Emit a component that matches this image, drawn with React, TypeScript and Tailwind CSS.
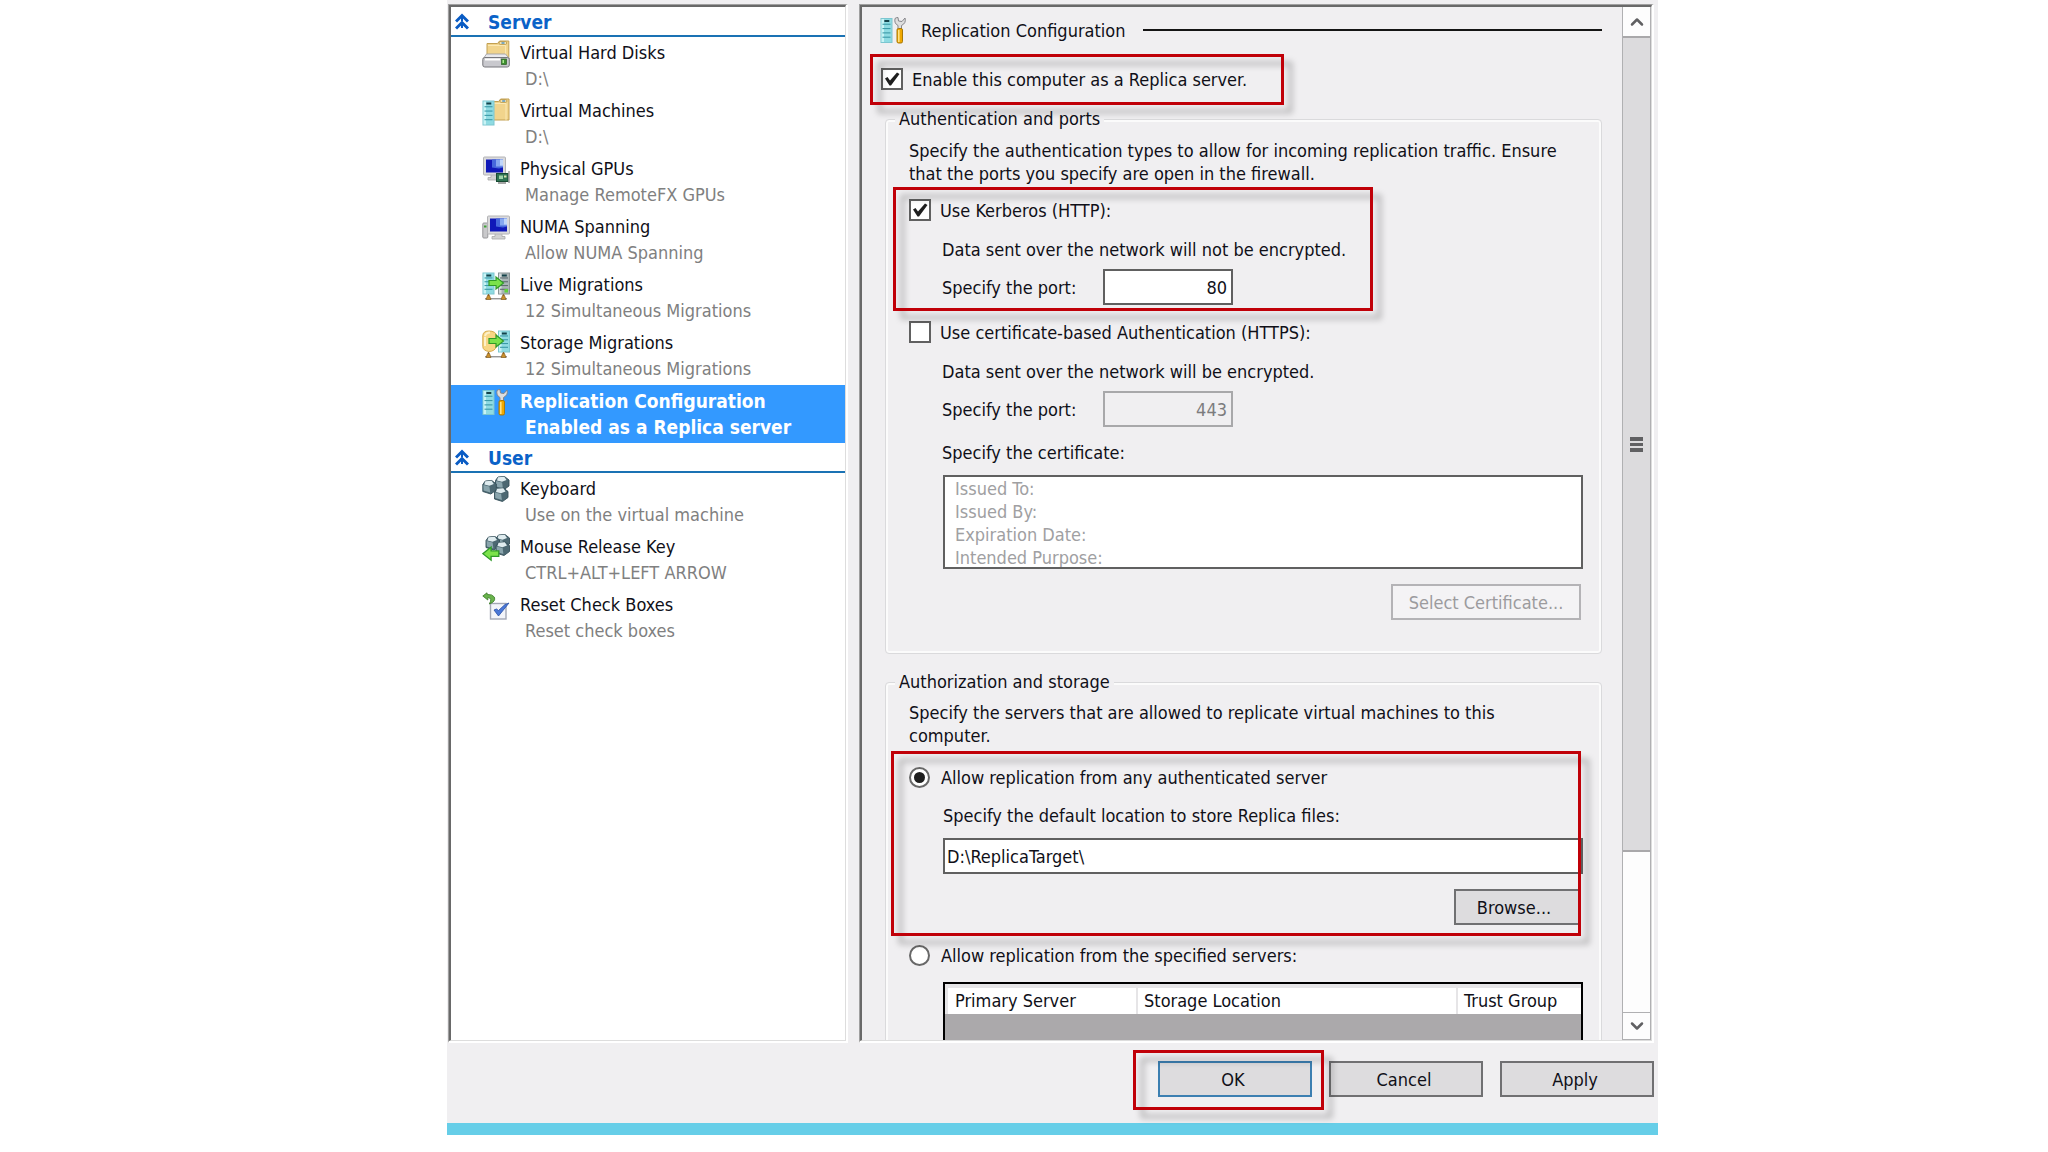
import { useState, type ReactNode } from 'react';
import { ChevronDown, ChevronUp } from 'lucide-react';

/* ---------- icons ---------- */

const iconProps = { width: 28, height: 28, viewBox: '0 0 28 28', className: 'shrink-0', 'aria-hidden': true };

function Folder({ x = 0, y = 0, w = 22, h = 20 }: { x?: number; y?: number; w?: number; h?: number }) {
  return (
    <g>
      <path d={`M${x} ${y + 3} h${w * 0.48} l2 -2.5 h${w * 0.42} v${h} h${-w * 0.9 - 2} z`} fill="#f1d48c" stroke="#c2a052" strokeWidth="1" />
      <rect x={x + w * 0.55} y={y + 1.2} width={w * 0.34} height="2.6" rx="1" fill="#fff3c4" stroke="#b08d3c" strokeWidth="0.8" />
      <rect x={x + w * 0.66} y={y + 1.8} width="3" height="1.4" fill="#4a90c8" />
      <path d={`M${x + 1} ${y + 5} h${w * 0.8} v${h - 4}`} fill="none" stroke="#fbe9b4" strokeWidth="1" />
    </g>
  );
}

function Tower({ x = 0, y = 0, w = 11, h = 25, dark = false }: { x?: number; y?: number; w?: number; h?: number; dark?: boolean }) {
  const line = dark ? '#5f6b70' : '#3b9aa8';
  return (
    <g>
      <rect x={x + 0.5} y={y + 0.5} width={w} height={h} fill={dark ? '#a9b4b5' : '#8fdbe2'} stroke={dark ? '#8a9495' : '#7cc6d0'} />
      <rect x={x + 1} y={y + 1} width="2.5" height={h - 1} fill={dark ? '#d5dcdc' : '#c9f3f5'} />
      <rect x={x + w * 0.35} y={y + 2} width={w * 0.45} height="2" fill="#14424a" />
      {[0.26, 0.44, 0.62, 0.8].map(t => (
        <path key={t} d={`M${x + 2} ${y + h * t} h${w - 3}`} stroke={line} strokeWidth="1.1" />
      ))}
    </g>
  );
}

function Monitor({ x = 0, y = 0 }: { x?: number; y?: number }) {
  return (
    <g>
      <path d={`M${x + 8} ${y + 18} h7 v3 h3 v2.5 h-13 v-2.5 h3 z`} fill="#d2d2d2" stroke="#a8a8a8" strokeWidth="0.8" />
      <rect x={x + 0.5} y={y + 0.5} width="22" height="18" rx="1" fill="#dadadc" stroke="#b4b4b6" />
      <rect x={x + 3} y={y + 3} width="17" height="13" fill="#1018b8" />
      <path d={`M${x + 9} ${y + 3} h11 v8 l-4 1 l-7 -1 z`} fill="#4668dc" />
      <path d={`M${x + 13} ${y + 3} h7 v7 h-7 z`} fill="#86a8f0" />
      <path d={`M${x + 17} ${y + 3} h3 v6 h-3 z`} fill="#c0d6fa" />
    </g>
  );
}

function GreenArrow({ x, y, flip = false }: { x: number; y: number; flip?: boolean }) {
  return (
    <path
      d="M0 4 h7 v-3.500 l7.500 6 l-7.500 6 v-3.500 h-7 z"
      transform={flip ? `translate(${x + 16} ${y}) scale(-1.1 1.1)` : `translate(${x} ${y})`}
      fill="#7be24a"
      stroke="#2f9a28"
      strokeWidth="1.2"
    />
  );
}

function NetworkFeet() {
  return (
    <g>
      <path d="M3 26.8 h22" stroke="#6c6c6c" strokeWidth="1" />
      <path d="M6.5 22 v2 M21.5 22 v2" stroke="#8a6a3a" strokeWidth="1.4" />
      <path d="M4 27.5 l1.5 -4 h2 l1.500 4 z M19 27.500 l1.500 -4 h2 l1.500 4 z" fill="#c98f2c" stroke="#7c5416" strokeWidth="0.6" />
    </g>
  );
}

function KeyCap({ x, y }: { x: number; y: number }) {
  return (
    <g strokeLinejoin="round">
      <path d={`M${x} ${y + 4} l2.5 -3.5 l6.5 -0.5 l4.500 3.500 v6 l-5.500 4 l-8 -2.500 z`} fill="#4c6872" stroke="#36505a" strokeWidth="0.9" />
      <path d={`M${x + 2.5} ${y + 0.8} l6.3 -0.5 l2.2 3.2 l-4.5 1.800 l-5 -1.300 z`} fill="#dfecef" />
      <path d={`M${x + 0.6} ${y + 4.6} l6 1.5 l0.8 6 l-6.600 -2.200 z`} fill="#8aa5ad" />
    </g>
  );
}

const DiskIcon = () => (
  <svg {...iconProps}>
    <Folder x={5} y={0.5} w={22} h={20} />
    <path d="M1 19 l3.5 -5 h19 l4 5 z" fill="#e9e9ec" stroke="#a2a2a6" strokeWidth="0.9" />
    <rect x="0.8" y="17.5" width="26.5" height="9.5" rx="2" fill="#c9c9ce" stroke="#77777c" />
    <path d="M3 19.5 h15" stroke="#fff" strokeWidth="2" />
    <rect x="19.5" y="19" width="5" height="5.5" fill="#3d8f2f" stroke="#2c5f24" strokeWidth="0.7" />
    <rect x="20.5" y="20" width="1.5" height="3" fill="#a9e88f" />
  </svg>
);

const VmIcon = () => (
  <svg {...iconProps}>
    <Folder x={7} y={0.5} w={20} h={21} />
    <Tower x={0.5} y={2.5} w={11} h={24} />
  </svg>
);

const GpuIcon = () => (
  <svg {...iconProps}>
    <Monitor x={1} y={0.5} />
    <rect x="14.5" y="17.5" width="11.5" height="8" fill="#2f7352" stroke="#184a33" />
    <rect x="17" y="19.5" width="4" height="3.5" fill="#9fd3a9" />
    <rect x="22" y="19.5" width="2.5" height="2" fill="#d9e8b0" />
    <path d="M27 15 v12 M16 27 h8" stroke="#8b8b8b" strokeWidth="1.3" />
  </svg>
);

const NumaIcon = () => (
  <svg {...iconProps}>
    <rect x="0.8" y="9" width="5" height="15" rx="1" fill="#c9c9cb" stroke="#98989b" />
    <path d="M2 12.5 h2.500" stroke="#3fa337" strokeWidth="2" />
    <Monitor x={5} y={1.5} />
  </svg>
);

const LiveMigrationIcon = () => (
  <svg {...iconProps}>
    <Tower x={0.5} y={0.5} w={11} h={21} />
    <Tower x={16} y={0.5} w={11} h={21} dark />
    <rect x="22.5" y="17" width="3.5" height="3.5" fill="#5fd23a" />
    <NetworkFeet />
    <GreenArrow x={7} y={4.5} />
  </svg>
);

const StorageMigrationIcon = () => (
  <svg {...iconProps}>
    <Tower x={16} y={0.5} w={11} h={21} />
    <path d="M0.8 6 q0 -5 6 -5 q7 0 8 5 v10 q-2 5.500 -8 5.500 q-6 -1 -6 -5 z" fill="#f8d684" stroke="#d6aa4c" />
    <path d="M3 6 q1 -3.500 5 -3.500 M3 7 v9" fill="none" stroke="#fdf0c8" strokeWidth="2" />
    <NetworkFeet />
    <GreenArrow x={7} y={4.5} />
  </svg>
);

const ReplicationIcon = () => (
  <svg {...iconProps}>
    <Tower x={0.5} y={2} w={11} h={24} />
    <path d="M15 2.5 q-1 5 3 7 v4 h3.5 v-4 q5 -2.500 3.500 -7.500 l-3 3.500 l-3.500 -0.500 l-0.500 -3.500 q-2 0 -3 1 z" fill="#dedede" stroke="#85858a" strokeWidth="1" />
    <rect x="17" y="12.5" width="5.500" height="14.500" rx="1.500" fill="#f0a800" stroke="#a87808" />
    <path d="M18.800 14 v12" stroke="#ffe58a" strokeWidth="1.5" />
  </svg>
);

const KeyboardIcon = () => (
  <svg {...iconProps}>
    <KeyCap x={13.5} y={0.5} />
    <KeyCap x={0.8} y={4.5} />
    <KeyCap x={12.5} y={12} />
  </svg>
);

const MouseReleaseIcon = () => (
  <svg {...iconProps}>
    <KeyCap x={14} y={0.5} />
    <KeyCap x={4} y={2.5} />
    <KeyCap x={14} y={8} />
    <GreenArrow x={0.8} y={12.5} flip />
  </svg>
);

const ResetIcon = () => (
  <svg {...iconProps}>
    <rect x="8.5" y="11.5" width="15.5" height="15.5" fill="#f3f5fa" stroke="#a3a8b5" strokeWidth="1.4" />
    <path d="M12 18 l4.500 6 L27 11 l-4 1.500 l-6.500 6 l-2 -1.500 z" fill="#4a78d8" stroke="#274fa5" strokeWidth="0.8" />
    <path d="M5 0.8 L0.8 4 l5 4 v-2.500 q5 0.500 1.500 6.500 q7 -2.500 5 -7 q-2 -3 -7 -2.500 z" fill="#69b34c" stroke="#397a26" strokeWidth="0.8" />
  </svg>
);

/* ---------- small building blocks ---------- */

// Frame drawn over the control that a step of the guide points at
function Highlight({ className }: { className: string }) {
  return <div aria-hidden className={`pointer-events-none absolute z-10 border-[3px] border-[#c00008] drop-shadow-[8px_8px_3px_rgba(0,0,0,0.3)] ${className}`} />;
}

function SunkenPanel({ className, children }: { className: string; children: ReactNode }) {
  return (
    <div className={`flex border-t border-l border-r-2 border-b-2 border-t-[#a0a0a0] border-l-[#a0a0a0] border-r-white border-b-white ${className}`}>
      <div className="flex min-w-0 flex-1 overflow-hidden border-t-2 border-l-2 border-r border-b border-t-[#696969] border-l-[#696969] border-r-[#dddddd] border-b-[#dddddd]">
        {children}
      </div>
    </div>
  );
}

interface ToggleProps {
  id: string;
  label: string;
  checked: boolean;
  onChange: () => void;
}

function CheckBox({ id, label, checked, onChange }: ToggleProps) {
  return (
    <div className="flex h-[26px] items-center gap-[9px]">
      <span className="grid shrink-0 place-items-center">
        <input id={id} type="checkbox" checked={checked} onChange={onChange} className="col-start-1 row-start-1 size-[22px] appearance-none border-2 border-[#606060] bg-white" />
        {checked && (
          <svg width="18" height="18" viewBox="0 0 18 18" className="pointer-events-none col-start-1 row-start-1" aria-hidden>
            <path d="M2 8.5 L4.5 7 L7 10.5 L14 2.5 L16.5 4 L8 15.500 L6.500 15.500 Z" fill="#1e1e1e" />
          </svg>
        )}
      </span>
      <label htmlFor={id}>{label}</label>
    </div>
  );
}

function Radio({ id, label, checked, onChange }: ToggleProps) {
  return (
    <div className="flex h-[26px] items-center gap-[11px]">
      <span className="grid shrink-0 place-items-center">
        <input id={id} type="radio" name="authorization" checked={checked} onChange={onChange} className="col-start-1 row-start-1 size-[21px] appearance-none rounded-full border-2 border-[#686868] bg-white" />
        {checked && <span className="pointer-events-none col-start-1 row-start-1 size-[11px] rounded-full bg-[#1e1e1e]" />}
      </span>
      <label htmlFor={id}>{label}</label>
    </div>
  );
}

function GroupBox({ title, className, children }: { title: string; className: string; children: ReactNode }) {
  return (
    <fieldset className={`mr-5 ml-[23px] min-w-0 rounded-[4px] border border-[#dadadc] pr-[18px] pb-[33px] pl-[23px] shadow-[inset_0_0_0_2px_#fbfbfb] ${className}`}>
      <legend className="-ml-[14px] h-[26px] bg-[#f0eff1] px-1 leading-[26px]">{title}</legend>
      {children}
    </fieldset>
  );
}

function Heading({ title }: { title: string }) {
  return (
    <h2 className="flex h-[30px] items-center border-b-2 border-[#1a72b4] pt-[2px] pl-1 text-[19px] font-bold text-[#0a62c8]">
      <svg width="14" height="18" viewBox="0 0 14 18" className="mr-[19px]" aria-hidden>
        <path d="M1 8.5 L7 2.5 L13 8.5 M1 15.5 L7 9.5 L13 15.5" fill="none" stroke="#0a5cc4" strokeWidth="3" />
        <path d="M7 3 v5 M7 10 v5" stroke="#0a5cc4" strokeWidth="2" />
      </svg>
      {title}
    </h2>
  );
}

interface Item {
  name: string;
  detail: string;
  icon: ReactNode;
}

const serverItems: Item[] = [
  { name: 'Virtual Hard Disks', detail: 'D:\\', icon: <DiskIcon /> },
  { name: 'Virtual Machines', detail: 'D:\\', icon: <VmIcon /> },
  { name: 'Physical GPUs', detail: 'Manage RemoteFX GPUs', icon: <GpuIcon /> },
  { name: 'NUMA Spanning', detail: 'Allow NUMA Spanning', icon: <NumaIcon /> },
  { name: 'Live Migrations', detail: '12 Simultaneous Migrations', icon: <LiveMigrationIcon /> },
  { name: 'Storage Migrations', detail: '12 Simultaneous Migrations', icon: <StorageMigrationIcon /> },
  { name: 'Replication Configuration', detail: 'Enabled as a Replica server', icon: <ReplicationIcon /> },
];

const userItems: Item[] = [
  { name: 'Keyboard', detail: 'Use on the virtual machine', icon: <KeyboardIcon /> },
  { name: 'Mouse Release Key', detail: 'CTRL+ALT+LEFT ARROW', icon: <MouseReleaseIcon /> },
  { name: 'Reset Check Boxes', detail: 'Reset check boxes', icon: <ResetIcon /> },
];

function ItemList({ items, selected, onSelect }: { items: Item[]; selected: string; onSelect: (name: string) => void }) {
  return (
    <ul>
      {items.map(item => {
        const active = item.name === selected;
        return (
          <li key={item.name}>
            <button
              onClick={() => onSelect(item.name)}
              className={`flex h-[58px] w-full items-start gap-[10px] pt-[3px] pl-[31px] text-left leading-[26px] ${active ? 'bg-[#3399ff] text-[19px] font-bold text-white' : ''}`}
            >
              {item.icon}
              <span className="flex flex-col">
                <span>{item.name}</span>
                <span className={`pl-[5px] ${active ? '' : 'text-[#808080]'}`}>{item.detail}</span>
              </span>
            </button>
          </li>
        );
      })}
    </ul>
  );
}

const dialogButton = 'h-9 w-[154px] border-2 bg-[#dddcde]';
const certificateFields = ['Issued To:', 'Issued By:', 'Expiration Date:', 'Intended Purpose:'];

export default function App() {
  const [selected, setSelected] = useState('Replication Configuration');
  const [enabled, setEnabled] = useState(true);
  const [kerberos, setKerberos] = useState(true);
  const [certificate, setCertificate] = useState(false);
  const [source, setSource] = useState<'any' | 'specified'>('any');
  const [port, setPort] = useState('80');
  const [location, setLocation] = useState('D:\\ReplicaTarget\\');

  return (
    <div className="h-screen overflow-hidden bg-white pr-[390px] pb-[17px] pl-[447px] font-['DejaVu_Sans_Condensed','DejaVu_Sans',sans-serif] text-[18px] text-[#101018]">
      <div className="flex h-full flex-col bg-[#f0eff1] pt-1">
        <div className="flex min-h-0 flex-1 gap-[11px] pr-1 pl-px">
          <SunkenPanel className="w-[400px] shrink-0">
            <nav className="flex-1 bg-white">
              <Heading title="Server" />
              <ItemList items={serverItems} selected={selected} onSelect={setSelected} />
              <Heading title="User" />
              <ItemList items={userItems} selected={selected} onSelect={setSelected} />
            </nav>
          </SunkenPanel>

          <SunkenPanel className="min-w-0 flex-1">
            <main className="min-w-0 flex-1">
              <div className="flex items-center pt-[9px] pr-5 pl-[18px]">
                <ReplicationIcon />
                <h1 className="mr-[17px] ml-[13px]">Replication Configuration</h1>
                <div className="h-[2px] flex-1 bg-[#141414]" />
              </div>

              <div className="relative mt-[22px] ml-[19px] w-[391px]">
                <CheckBox id="enable-replica" label="Enable this computer as a Replica server." checked={enabled} onChange={() => setEnabled(!enabled)} />
                <Highlight className="-top-3 -right-3 -bottom-[13px] -left-[11px]" />
              </div>

              <GroupBox title="Authentication and ports" className="mt-[14px]">
                <p className="pt-[7px] leading-[23px]">
                  Specify the authentication types to allow for incoming replication traffic. Ensure
                  <br />
                  that the ports you specify are open in the firewall.
                </p>

                <div className="relative mt-3 w-[448px]">
                  <CheckBox id="kerberos" label="Use Kerberos (HTTP):" checked={kerberos} onChange={() => setKerberos(!kerberos)} />
                  <p className="mt-[14px] pl-[33px] leading-[26px]">Data sent over the network will not be encrypted.</p>
                  <div className="mt-[6px] flex items-center pl-[33px]">
                    <label htmlFor="http-port" className="w-[161px]">Specify the port:</label>
                    <input id="http-port" value={port} onChange={e => setPort(e.target.value)} className="h-9 w-[130px] border-2 border-[#606060] bg-white pr-1 text-right" />
                  </div>
                  <Highlight className="-top-[10px] -right-4 -bottom-[6px] -left-4" />
                </div>

                <div className="mt-[14px]">
                  <CheckBox id="certificate-auth" label="Use certificate-based Authentication (HTTPS):" checked={certificate} onChange={() => setCertificate(!certificate)} />
                  <p className="mt-[14px] pl-[33px] leading-[26px]">Data sent over the network will be encrypted.</p>
                  <div className="mt-[6px] flex items-center pl-[33px]">
                    <label htmlFor="https-port" className="w-[161px]">Specify the port:</label>
                    <input id="https-port" value="443" disabled readOnly className="h-9 w-[130px] border-2 border-[#a8a8aa] pr-1 text-right text-[#7c7c7e]" />
                  </div>
                  <p className="mt-[13px] pl-[33px] leading-[26px]">Specify the certificate:</p>
                  <ul className="mt-[9px] ml-[34px] h-[94px] overflow-hidden border-2 border-[#606060] bg-white pl-[10px] leading-[23px] text-[#a0a0a2]">
                    {certificateFields.map(field => <li key={field}>{field}</li>)}
                  </ul>
                  <div className="mt-[15px] flex justify-end pr-[2px]">
                    <button disabled className="h-9 w-[190px] border-2 border-[#b4b3b6] bg-[#f4f3f5] text-[#9c9b9e]">Select Certificate...</button>
                  </div>
                </div>
              </GroupBox>

              <GroupBox title="Authorization and storage" className="mt-[15px]">
                <p className="pt-[6px] leading-[23px]">
                  Specify the servers that are allowed to replicate virtual machines to this
                  <br />
                  computer.
                </p>

                <div className="relative mt-[17px]">
                  <Radio id="any-server" label="Allow replication from any authenticated server" checked={source === 'any'} onChange={() => setSource('any')} />
                  <div className="flex flex-col pl-[34px]">
                    <label htmlFor="location" className="mt-[13px] leading-[26px]">Specify the default location to store Replica files:</label>
                    <input id="location" value={location} onChange={e => setLocation(e.target.value)} className="mt-[9px] h-9 border-2 border-[#606060] bg-white pl-[2px]" />
                    <button className="mt-[15px] mr-[2px] h-9 w-[127px] self-end border-2 border-[#707072] bg-[#dddcde] pr-[7px]">Browse...</button>
                  </div>
                  <Highlight className="-top-[13px] right-[2px] -bottom-[11px] -left-[18px]" />
                </div>

                <div className="mt-[17px]">
                  <Radio id="specified-servers" label="Allow replication from the specified servers:" checked={source === 'specified'} onChange={() => setSource('specified')} />
                </div>
                <div className="mt-[14px] ml-[34px] h-[160px] overflow-hidden border-2 border-black bg-[#aba9ab]">
                  <table className="w-full table-fixed border-separate border-spacing-0 text-left">
                    <thead>
                      <tr className="h-[30px] bg-white leading-[24px]">
                        <th className="w-[193px] border-t-4 border-r-2 border-l-[3px] border-[#e6e5e7] pl-[7px] font-normal">Primary Server</th>
                        <th className="w-[320px] border-t-4 border-r-2 border-[#e6e5e7] pl-[6px] font-normal">Storage Location</th>
                        <th className="border-t-4 border-[#e6e5e7] pl-[6px] font-normal">Trust Group</th>
                      </tr>
                    </thead>
                  </table>
                </div>
              </GroupBox>
            </main>

            <div className="flex w-[29px] shrink-0 flex-col border-x border-[#b0b0b2] bg-[#fdfdfd]">
              <button aria-label="Scroll up" className="flex h-[29px] shrink-0 items-center justify-center">
                <ChevronUp size={20} strokeWidth={3} className="text-[#606062]" />
              </button>
              <div className="flex flex-1 flex-col items-center justify-center gap-[2px] border-y-2 border-[#a9a8aa] bg-[#dcdbdd]">
                <div className="h-[4px] w-[13px] bg-[#606062]" />
                <div className="h-[3px] w-[13px] bg-[#606062]" />
                <div className="h-[4px] w-[13px] bg-[#606062]" />
              </div>
              <button aria-label="Scroll down" className="mt-[160px] flex h-7 shrink-0 items-center justify-center border-y border-[#b0b0b2]">
                <ChevronDown size={20} strokeWidth={3} className="text-[#606062]" />
              </button>
            </div>
          </SunkenPanel>
        </div>

        <div className="flex h-20 shrink-0 items-start justify-end gap-[17px] pt-[18px] pr-1">
          <div className="relative">
            <button className={`${dialogButton} border-[#3c7fb1] pr-1`}>OK</button>
            <Highlight className="-top-[11px] -right-3 -bottom-[13px] -left-[25px]" />
          </div>
          <button className={`${dialogButton} border-[#707072] pr-1`}>Cancel</button>
          <button className={`${dialogButton} border-[#707072] pr-1`}>Apply</button>
        </div>
        <div className="h-3 shrink-0 bg-[#66cee8]" />
      </div>
    </div>
  );
}
